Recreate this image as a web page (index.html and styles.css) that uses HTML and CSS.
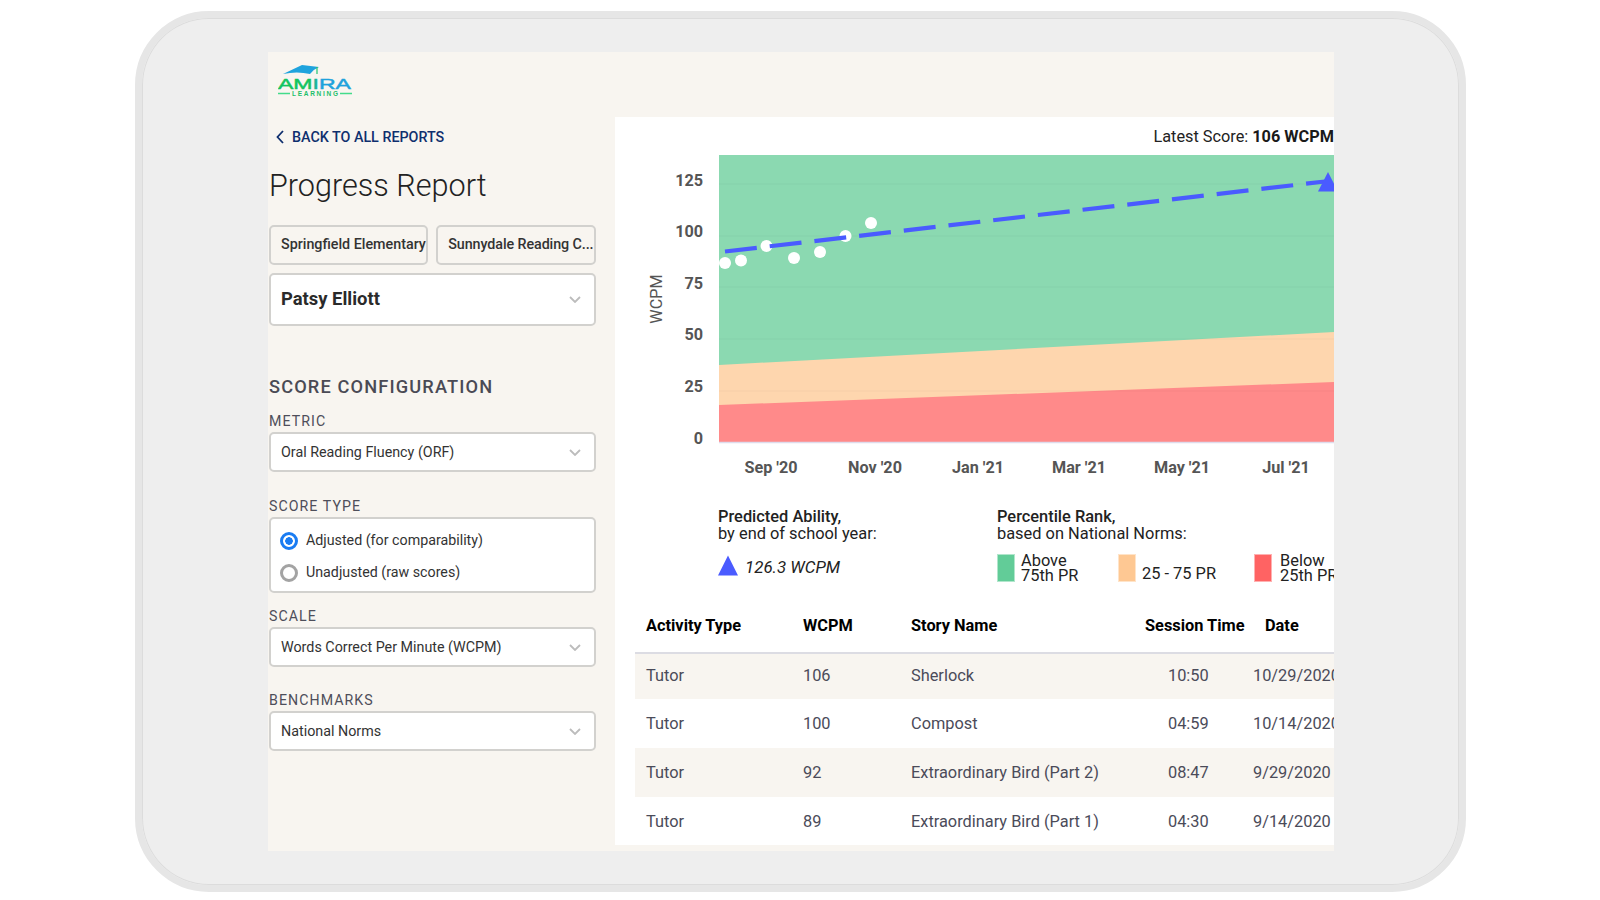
FILE: index.html
```html
<!DOCTYPE html>
<html lang="en">
<head>
<meta charset="utf-8">
<title>Progress Report</title>
<link rel="stylesheet" href="styles.css">
</head>
<body>
<div class="device">
  <div class="screen">
    <aside class="side">
      <svg class="logo" width="80" height="36" viewBox="0 0 80 36">
        <path class="cap" d="M5 10 L24 1 L41 3 Q36 5 32 10 Q19 7 5 10 Z"/>
        <path class="tassel" d="M39 3 V10"/>
        <text class="logo-word" x="0" y="25" textLength="73" lengthAdjust="spacingAndGlyphs"><tspan class="g">AM</tspan><tspan class="t">I</tspan><tspan class="b">RA</tspan></text>
        <path class="logo-rule" d="M0 29.5 H12 M62 29.5 H74"/>
        <text class="logo-sub" x="14" y="32" textLength="46" lengthAdjust="spacing">LEARNING</text>
      </svg>
      <a class="back">
        <svg width="8" height="14" viewBox="0 0 8 14"><path d="M7 1 L1.5 7 L7 13"/></svg>
        <span>BACK TO ALL REPORTS</span>
      </a>
      <h1 class="title">Progress Report</h1>
      <div class="chips">
        <button class="chip">Springfield Elementary</button>
        <button class="chip chip-tight">Sunnydale Reading C...</button>
      </div>
      <div class="select select-big"><span>Patsy Elliott</span><svg class="chev" width="12" height="7" viewBox="0 0 12 7"><path d="M1 1 L6 6 L11 1"/></svg></div>
      <h2 class="section">SCORE CONFIGURATION</h2>
      <label class="field-label first">METRIC</label>
      <div class="select"><span>Oral Reading Fluency (ORF)</span><svg class="chev" width="12" height="7" viewBox="0 0 12 7"><path d="M1 1 L6 6 L11 1"/></svg></div>
      <label class="field-label label-type">SCORE TYPE</label>
      <div class="radios">
        <div class="radio-row"><i class="radio on"></i><span>Adjusted (for comparability)</span></div>
        <div class="radio-row"><i class="radio"></i><span>Unadjusted (raw scores)</span></div>
      </div>
      <label class="field-label label-scale">SCALE</label>
      <div class="select"><span>Words Correct Per Minute (WCPM)</span><svg class="chev" width="12" height="7" viewBox="0 0 12 7"><path d="M1 1 L6 6 L11 1"/></svg></div>
      <label class="field-label">BENCHMARKS</label>
      <div class="select"><span>National Norms</span><svg class="chev" width="12" height="7" viewBox="0 0 12 7"><path d="M1 1 L6 6 L11 1"/></svg></div>
    </aside>
    <main class="card">
      <p class="latest">Latest Score: <b>106 WCPM</b></p>
      <svg class="chart" width="719" height="360" viewBox="615 140 719 360">
        <rect class="a-green" x="719" y="155" width="615" height="287"/>
        <polygon class="a-orange" points="719,365 1334,332 1334,442 719,442"/>
        <polygon class="a-red" points="719,405 1334,382 1334,442 719,442"/>
        <path class="grid" d="M719 184H1334M719 236H1334M719 287H1334M719 339H1334M719 391H1334"/>
        <path class="axis" d="M719 442.5H1334"/>
        <g class="ylab">
          <text x="703" y="186">125</text>
          <text x="703" y="237">100</text>
          <text x="703" y="289">75</text>
          <text x="703" y="340">50</text>
          <text x="703" y="392">25</text>
          <text x="703" y="444">0</text>
        </g>
        <text class="ytitle" transform="translate(662 299) rotate(-90)">WCPM</text>
        <g class="xlab">
          <text x="771" y="472.5">Sep '20</text>
          <text x="875" y="472.5">Nov '20</text>
          <text x="978" y="472.5">Jan '21</text>
          <text x="1079" y="472.5">Mar '21</text>
          <text x="1182" y="472.5">May '21</text>
          <text x="1286" y="472.5">Jul '21</text>
        </g>
        <g class="dots">
          <circle cx="725" cy="263" r="6"/>
          <circle cx="741" cy="260.5" r="6"/>
          <circle cx="766.5" cy="246" r="6"/>
          <circle cx="794" cy="258" r="6"/>
          <circle cx="820" cy="252" r="6"/>
          <circle cx="845.5" cy="236" r="6"/>
          <circle cx="871" cy="223" r="6"/>
        </g>
        <path class="trend" d="M725 251.5 L1325 181.5"/>
        <polygon class="tri" points="1328,172 1318,191.5 1338,191.5"/>
      </svg>
      <section class="legend">
        <div class="legend-pred">
          <p class="legend-head"><b>Predicted Ability,</b><br>by end of school year:</p>
          <div class="pred-val">
            <svg width="20" height="21" viewBox="0 0 20 21"><polygon class="tri" points="10,0.5 0,20.5 20,20.5"/></svg>
            <em>126.3 WCPM</em>
          </div>
        </div>
        <div class="legend-pr">
          <p class="legend-head"><b>Percentile Rank,</b><br>based on National Norms:</p>
          <div class="keys">
            <div class="key key-a"><i class="sw sw-g"></i><span>Above<br>75th PR</span></div>
            <div class="key key-b"><i class="sw sw-o"></i><span><br>25 - 75 PR</span></div>
            <div class="key key-c"><i class="sw sw-r"></i><span>Below<br>25th PR</span></div>
          </div>
        </div>
      </section>
      <table class="table">
        <colgroup><col class="c1"><col class="c2"><col class="c3"><col class="c4"><col class="c5"></colgroup>
        <thead>
          <tr><th>Activity Type</th><th>WCPM</th><th>Story Name</th><th>Session Time</th><th class="th-date">Date</th></tr>
        </thead>
        <tbody>
          <tr class="row-first"><td>Tutor</td><td>106</td><td>Sherlock</td><td class="td-time">10:50</td><td>10/29/2020</td></tr>
          <tr><td>Tutor</td><td>100</td><td>Compost</td><td class="td-time">04:59</td><td>10/14/2020</td></tr>
          <tr><td>Tutor</td><td>92</td><td>Extraordinary Bird (Part 2)</td><td class="td-time">08:47</td><td>9/29/2020</td></tr>
          <tr><td>Tutor</td><td>89</td><td>Extraordinary Bird (Part 1)</td><td class="td-time">04:30</td><td>9/14/2020</td></tr>
        </tbody>
      </table>
    </main>
  </div>
</div>
</body>
</html>
```
FILE: styles.css
```css
* { box-sizing: border-box; }
html, body { margin: 0; height: 100%; }
body { background: #fff; font-family: Roboto, "Liberation Sans", sans-serif; overflow: hidden; }
p, h1, h2 { margin: 0; font-weight: inherit; }

.device {
  width: 1331px; height: 881px;
  margin: 11px 0 0 135px;
  padding: 34px 124px 34px 126px;
  border: 7px solid #e6e6e6;
  border-radius: 74px;
  background: #eeeeee;
  box-shadow: inset 0 0 0 1px #dcdcdc;
}
.screen {
  display: flex;
  width: 1066px; height: 799px;
  overflow: hidden;
  background: #f8f5f0;
}

/* sidebar */
.side { flex: 0 0 347px; padding: 12px 0 0 1px; }
.logo { display: block; margin-left: 9px; }
.logo .cap { fill: #1fa3dd; }
.logo .tassel { stroke: #22c46f; stroke-width: 1.2; fill: none; }
.logo-word { font: 400 15.5px "Liberation Sans", sans-serif; stroke-width: .45px; paint-order: stroke; }
.logo .g { fill: #12c45f; stroke: #12c45f; }
.logo .t { fill: #18b39a; stroke: #18b39a; }
.logo .b { fill: #1ea2dc; stroke: #1ea2dc; }
.logo-rule { stroke: #43dc8a; stroke-width: 1.4; fill: none; }
.logo-sub { font: 700 6.5px "Liberation Sans", sans-serif; fill: #1dbf6a; }

.back { display: flex; align-items: center; gap: 8px; margin: 28px 0 0 7px; height: 18px; color: #0f2f6e; font-size: 14.3px; font-weight: 500; }
.back svg path { fill: none; stroke: #0f2f6e; stroke-width: 1.8; }
.title { margin: 21px 0 0 0; font-size: 30.6px; font-weight: 300; line-height: 38px; color: #222; }

.chips { display: flex; gap: 8px; margin-top: 20px; width: 326.5px; }
.chip {
  flex: 1 1 0; height: 39.5px; padding: 0 0 2px 10px;
  border: 2px solid #d2d1ce; border-radius: 5px;
  background: transparent; color: #333;
  font: 500 14.3px Roboto, sans-serif; text-align: left; white-space: nowrap;
}
.chip-tight { letter-spacing: -.08px; }
.select {
  display: flex; align-items: center; justify-content: space-between;
  width: 326.5px; height: 40px; padding: 0 13px 0 10px;
  border: 2px solid #d2d1ce; border-radius: 5px;
  background: #fff; color: #333; font-size: 14.3px;
}
.select-big { height: 53px; margin-top: 8.5px; padding-bottom: 2px; font-size: 18.4px; font-weight: 700; color: #2a2a2a; }
.select-big .chev { margin-top: 2px; }
.chev { flex: none; }
.chev path { fill: none; stroke: #bcbcbc; stroke-width: 1.8; }

.section { margin-top: 50px; font-size: 18.2px; line-height: 22px; font-weight: 500; letter-spacing: 1.15px; color: #4a4a55; }
.field-label { display: block; margin-top: 25px; height: 16px; line-height: 16px; font-size: 14.2px; letter-spacing: 1.05px; color: #4e4e5a; margin-bottom: 3px; }
.field-label.first { margin-top: 15px; margin-bottom: 3px; }
.field-label.label-type { margin-top: 26px; margin-bottom: 3px; }
.field-label.label-scale { margin-top: 15px; }
.radios { width: 326.5px; height: 76px; padding: 6px 0 0 9px; border: 2px solid #d2d1ce; border-radius: 5px; background: #fff; color: #333; font-size: 14.25px; }
.radio-row { display: flex; align-items: center; gap: 8px; height: 32px; }
.radio-row span { margin-top: -3px; }
.radio-row + .radio-row span { margin-top: -2px; }
.radio { display: block; width: 18px; height: 18px; border: 3px solid #a3a3a3; border-radius: 50%; background: #fff; }
.radio.on { border-color: #1a7cf2; background: radial-gradient(circle, #1a7cf2 0 3.5px, #fff 4px); }

/* card */
.card { flex: 0 0 719px; height: 728px; margin-top: 65px; overflow: hidden; background: #fff; }
.latest { height: 23px; padding-top: 9px; line-height: 22px; text-align: right; font-size: 16.3px; color: #222; white-space: nowrap; }
.latest b { font-weight: 700; color: #1a1a1a; }
.chart { display: block; }
.a-green { fill: #8bd9b1; }
.a-orange { fill: #fed6ae; }
.a-red { fill: #ff8a8a; }
.grid { stroke: #000; stroke-opacity: .035; stroke-width: 1; fill: none; }
.axis { stroke: #dedcec; stroke-width: 1.5; fill: none; }
.ylab text { font: 700 16.2px Roboto, sans-serif; fill: #555; text-anchor: end; }
.xlab text { font: 700 16.2px Roboto, sans-serif; fill: #555; text-anchor: middle; }
.ytitle { font: 400 16.2px Roboto, sans-serif; fill: #555; text-anchor: middle; }
.dots circle { fill: #fff; }
.trend { stroke: #4a5bff; stroke-width: 4.2; stroke-dasharray: 32 13; fill: none; }
.tri { fill: #4a5bff; }

.legend { display: flex; height: 101px; padding: 9px 0 0 103px; color: #222; font-size: 16.4px; line-height: 16.5px; }
.legend-head b { font-weight: 500; }
.legend-pred { flex: 0 0 279px; }
.pred-val { display: flex; align-items: center; gap: 7px; margin-top: 13px; }
.pred-val svg { display: block; }
.pred-val em { font-style: italic; font-size: 16.9px; margin-top: 4px; }
.keys { display: flex; margin-top: 12px; white-space: nowrap; line-height: 15px; }
.key { display: flex; gap: 6px; }
.key span { margin-top: -1px; }
.key-a { flex: 0 0 121px; }
.key-b { flex: 0 0 136px; }
.key-b span { margin-top: -3px; }
.key-c { flex: none; }
.key-c span { margin-left: 2px; }
.sw { display: block; width: 18px; height: 28px; border: 1px solid rgba(255,255,255,.5); }
.sw-g { background: #62cc98; }
.sw-o { background: #fec893; }
.sw-r { background: #ff6363; }

.table { width: 699px; margin-left: 20px; table-layout: fixed; border-collapse: collapse; font-size: 16.35px; color: #4b4b59; }
.c1 { width: 168px; } .c2 { width: 108px; } .c3 { width: 234px; } .c4 { width: 108px; } .c5 { width: 81px; }
.table th { height: 52px; padding: 0 0 2px; text-align: left; font-weight: 700; color: #000; border-bottom: 2px solid #dcdce3; white-space: nowrap; }
.table th:first-child, .table td:first-child { padding-left: 11px; }
.table td { height: 49px; padding: 0; white-space: nowrap; overflow: hidden; }
.table .row-first td { height: 46px; padding-bottom: 3px; }
.table tbody tr:nth-child(odd) { background: #f8f5f0; }
.th-date { padding-left: 12px !important; }
.td-time { padding-left: 23px !important; }
```
